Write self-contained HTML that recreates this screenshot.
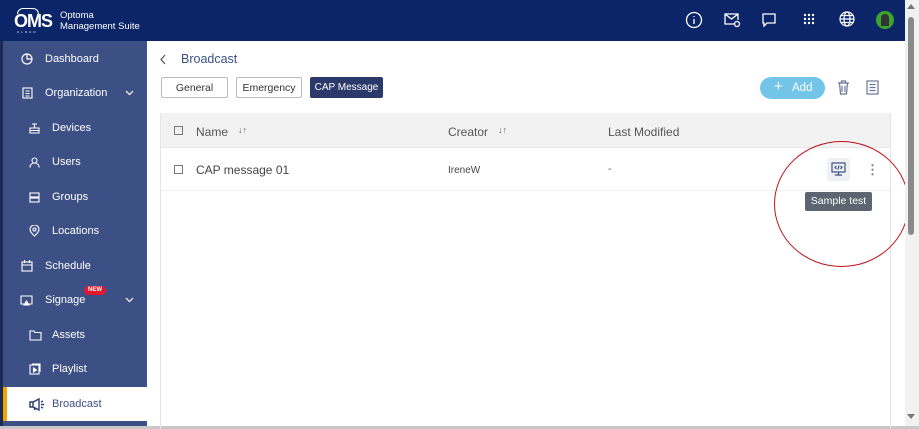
<!DOCTYPE html>
<html><head><meta charset="utf-8"><style>
*{box-sizing:border-box;margin:0;padding:0}
body{width:919px;height:429px;overflow:hidden;background:#fff;font-family:"Liberation Sans",sans-serif;position:relative}
.hdr{position:absolute;left:0;top:0;width:905px;height:41px;background:#0b2568}
.side{position:absolute;left:3px;top:41px;width:144px;height:382px;background:#3d5085;color:#fff;font-size:11px}
.item{position:absolute;left:0;width:144px;height:34px;display:flex;align-items:center}
.item svg{position:absolute}
.item span{position:absolute}
.abs{position:absolute}
.btn{position:absolute;top:77px;height:21px;border:1px solid #bbb;border-radius:2px;font-size:10.5px;color:#333;display:flex;align-items:center;justify-content:center;white-space:nowrap}
.th{font-size:12px;color:#555}
</style></head><body>
<div class="abs" style="left:0;top:0;width:3px;height:429px;background:#1b2a55"></div>
<div class="hdr">
 <div class="abs" style="left:14px;top:11px;color:#fff;font-weight:bold;font-size:18px;letter-spacing:-1px">OMS</div>
 <div class="abs" style="left:17px;top:8px;width:22px;height:6px;border:1px solid #fff;border-bottom:none;border-radius:8px 8px 0 0"></div>
 <div class="abs" style="left:17px;top:30px;color:#fff;font-size:3px;letter-spacing:2px">CLOUD</div>
 <div class="abs" style="left:60px;top:10px;color:#fff;font-size:9.5px;line-height:11px">Optoma<br>Management Suite</div>
 <svg class="abs" style="left:685px;top:11px" width="18" height="18" viewBox="0 0 18 18" fill="none" stroke="#fff" stroke-width="1.3"><circle cx="9" cy="9" r="7.5"/><path d="M9 8v5M9 5v1"/></svg>
 <svg class="abs" style="left:723px;top:12px" width="18" height="16" viewBox="0 0 18 16" fill="none" stroke="#fff" stroke-width="1.3"><path d="M12 12H2V2h13v6M2 2l6.5 5L15 2"/><circle cx="14" cy="12" r="2.5"/></svg>
 <svg class="abs" style="left:762px;top:13px" width="14" height="14" viewBox="0 0 14 14" fill="none" stroke="#fff" stroke-width="1.3"><path d="M1 1h12v9H5l-3 3V10H1z"/></svg>
 <svg class="abs" style="left:803px;top:13px" width="12" height="12" viewBox="0 0 12 12" fill="#fff"><circle cx="2" cy="2" r="1.2"/><circle cx="6" cy="2" r="1.2"/><circle cx="10" cy="2" r="1.2"/><circle cx="2" cy="6" r="1.2"/><circle cx="6" cy="6" r="1.2"/><circle cx="10" cy="6" r="1.2"/><circle cx="2" cy="10" r="1.2"/><circle cx="6" cy="10" r="1.2"/><circle cx="10" cy="10" r="1.2"/></svg>
 <svg class="abs" style="left:839px;top:11px" width="16" height="16" viewBox="0 0 16 16" fill="none" stroke="#fff" stroke-width="1.2"><circle cx="8" cy="8" r="7"/><ellipse cx="8" cy="8" rx="3" ry="7"/><path d="M1 8h14M2 4.5h12M2 11.5h12"/></svg>
 <div class="abs" style="left:876px;top:11px;width:18px;height:18px;border-radius:50%;background:#3aa52d"><div class="abs" style="left:5px;top:3px;width:8px;height:12px;background:#333;border-radius:4px 4px 0 0"></div></div>
</div>
<div class="side">
 <div class="item" style="top:1px"><svg style="left:18px" width="12" height="12" viewBox="0 0 12 12" fill="none" stroke="#fff" stroke-width="1.2"><circle cx="6" cy="6" r="5"/><path d="M6 1v5h5"/></svg><span style="left:42px">Dashboard</span></div>
 <div class="item" style="top:35px"><svg style="left:19px" width="11" height="12" viewBox="0 0 11 12" fill="none" stroke="#fff" stroke-width="1.1"><rect x="1" y="1" width="9" height="10"/><path d="M3.5 4h4M3.5 6.5h4M3.5 9h4"/></svg><span style="left:42px">Organization</span><svg style="left:122px" width="9" height="6" viewBox="0 0 9 6" fill="none" stroke="#fff" stroke-width="1.2"><path d="M1 1l3.5 3.5L8 1"/></svg></div>
 <div class="item" style="top:70px"><svg style="left:26px" width="11" height="11" viewBox="0 0 11 11" fill="none" stroke="#fff" stroke-width="1.1"><path d="M3 1h5M5.5 1v4M1 5h9v5H1zM1 7.5h9"/></svg><span style="left:49px">Devices</span></div>
 <div class="item" style="top:104px"><svg style="left:26px" width="11" height="11" viewBox="0 0 11 11" fill="none" stroke="#fff" stroke-width="1.1"><circle cx="5.5" cy="3.5" r="2.5"/><path d="M1 10.5c0-3 2-4.5 4.5-4.5S10 7.5 10 10.5"/></svg><span style="left:49px">Users</span></div>
 <div class="item" style="top:139px"><svg style="left:26px" width="11" height="11" viewBox="0 0 11 11" fill="none" stroke="#fff" stroke-width="1.1"><rect x="1" y="1" width="9" height="4"/><rect x="1" y="6" width="9" height="4"/></svg><span style="left:49px">Groups</span></div>
 <div class="item" style="top:173px"><svg style="left:26px" width="11" height="12" viewBox="0 0 11 12" fill="none" stroke="#fff" stroke-width="1.1"><path d="M5.5 11S1 7 1 4.5a4.5 4.5 0 019 0C10 7 5.5 11 5.5 11z"/><circle cx="5.5" cy="4.5" r="1.5"/></svg><span style="left:49px">Locations</span></div>
 <div class="item" style="top:208px"><svg style="left:18px" width="12" height="12" viewBox="0 0 12 12" fill="none" stroke="#fff" stroke-width="1.1"><rect x="1" y="2" width="10" height="9"/><path d="M1 5h10M3.5 0v3M8.5 0v3"/></svg><span style="left:42px">Schedule</span></div>
 <div class="item" style="top:242px"><svg style="left:17px" width="13" height="11" viewBox="0 0 13 11" fill="none" stroke="#fff" stroke-width="1.1"><path d="M4 9H1V1h11v8H9"/><path d="M6.5 6L4 10h5z" fill="#fff"/></svg><span style="left:42px">Signage</span><div class="abs" style="left:81px;top:3px;width:22px;height:9px;background:#e0182e;border-radius:5px;font-size:6px;font-weight:bold;text-align:center;line-height:9px">NEW</div><svg style="left:122px" width="9" height="6" viewBox="0 0 9 6" fill="none" stroke="#fff" stroke-width="1.2"><path d="M1 1l3.5 3.5L8 1"/></svg></div>
 <div class="item" style="top:277px"><svg style="left:26px" width="13" height="11" viewBox="0 0 13 11" fill="none" stroke="#fff" stroke-width="1.1"><path d="M1 1h4l1 1.5h6V10H1z"/></svg><span style="left:49px">Assets</span></div>
 <div class="item" style="top:311px"><svg style="left:26px" width="12" height="12" viewBox="0 0 12 12" fill="none" stroke="#fff" stroke-width="1.1"><rect x="1" y="2" width="9" height="9"/><path d="M3 1h8v8"/><path d="M4.5 5v4l3-2z" fill="#fff"/></svg><span style="left:49px">Playlist</span></div>
 <div class="item" style="top:346px;background:#fff;height:34px;color:#3d5085"><div class="abs" style="left:0;top:0;width:4px;height:34px;background:#f0a500"></div><svg style="left:26px" width="16" height="13" viewBox="0 0 16 13" fill="none" stroke="#2b3a70" stroke-width="1.4"><path d="M1 4h3l6-3v11L4 9H1zM4 4v5M5 9l1 3M12 4l2-1M12 6.5h3M12 9l2 1"/></svg><span style="left:49px">Broadcast</span></div>
</div>
<div class="abs" style="left:3px;top:423px;width:144px;height:4px;background:#3d5085"></div>
<div class="abs" style="left:0;top:426px;width:919px;height:3px;background:#c8c8c8"></div>
<svg class="abs" style="left:159px;top:54px" width="8" height="11" viewBox="0 0 8 11" fill="none" stroke="#555" stroke-width="1.2"><path d="M6 1L2 5.5 6 10"/></svg>
<div class="abs" style="left:181px;top:52px;font-size:12.5px;color:#3d5085">Broadcast</div>
<div class="btn" style="left:161px;width:67px">General</div>
<div class="btn" style="left:236px;width:66px">Emergency</div>
<div class="btn" style="left:310px;width:73px;background:#2b3a6b;border-color:#2b3a6b;color:#fff;font-size:10px">CAP Message</div>
<div class="abs" style="left:760px;top:77px;width:65px;height:22px;border-radius:11px;background:#72c4e8;color:#fff;font-size:11.5px;line-height:22px"><span style="position:absolute;left:14px;font-size:15px;top:-1px">+</span><span style="position:absolute;left:32px">Add</span></div>
<svg class="abs" style="left:837px;top:80px" width="13" height="15" viewBox="0 0 13 15" fill="none" stroke="#6a7598" stroke-width="1.2"><path d="M1 3h11M4.5 3V1h4v2M2.5 3l1 11h6l1-11M5 6v6M8 6v6"/></svg>
<svg class="abs" style="left:866px;top:80px" width="13" height="15" viewBox="0 0 13 15" fill="none" stroke="#6a7598" stroke-width="1.2"><rect x="1" y="1" width="11" height="13"/><path d="M3.5 4.5h6M3.5 7.5h6M3.5 10.5h6"/></svg>
<div class="abs" style="left:160px;top:113px;width:731px;height:316px;border-left:1px solid #e5e5e5;border-right:1px solid #e5e5e5"></div>
<div class="abs" style="left:161px;top:113px;width:729px;height:35px;background:#f2f2f2;border-bottom:1px solid #e6e6e6"></div>
<div class="abs" style="left:174px;top:126px;width:9px;height:9px;border:1px solid #777"></div>
<div class="abs th" style="left:196px;top:125px">Name</div>
<div class="abs" style="left:238px;top:125px;font-size:9px;color:#666">↓↑</div>
<div class="abs th" style="left:448px;top:125px">Creator</div>
<div class="abs" style="left:498px;top:125px;font-size:9px;color:#666">↓↑</div>
<div class="abs th" style="left:608px;top:125px">Last Modified</div>
<div class="abs" style="left:161px;top:190px;width:729px;height:1px;background:#eee"></div>
<div class="abs" style="left:174px;top:165px;width:9px;height:9px;border:1px solid #777"></div>
<div class="abs" style="left:196px;top:163px;font-size:12px;color:#444">CAP message 01</div>
<div class="abs" style="left:448px;top:165px;font-size:10px;color:#444">IreneW</div>
<div class="abs" style="left:608px;top:163px;font-size:11px;color:#666">-</div>
<div class="abs" style="left:827px;top:158px;width:23px;height:23px;background:#eef0f3;border-radius:3px"></div>
<svg class="abs" style="left:831px;top:162px" width="15" height="14" viewBox="0 0 15 14" fill="none" stroke="#3d5085" stroke-width="1.2"><rect x="1" y="1" width="13" height="9"/><path d="M4 13h7M7.5 10v3M5.5 4L4 5.5 5.5 7M9.5 4L11 5.5 9.5 7M8 3.5L7 7.5"/></svg>
<div class="abs" style="left:871px;top:163px;width:3px;height:13px;background:radial-gradient(circle,#888 1px,transparent 1.3px) 0 0/3px 4.5px"></div>
<div class="abs" style="left:805px;top:192px;width:67px;height:19px;background:#5b6670;border-radius:2px;color:#fff;font-size:10.5px;line-height:19px;text-align:center">Sample test</div>
<div class="abs" style="left:774px;top:141px;width:135px;height:126px;border:1.5px solid #c0121c;border-radius:50%"></div>
<div class="abs" style="left:905px;top:0;width:14px;height:426px;background:#f1f1f1"></div>
<div class="abs" style="left:908px;top:17px;width:6px;height:218px;background:#8a8a8a;border-radius:3px"></div>
<div class="abs" style="left:907px;top:4px;width:0;height:0;border-left:4px solid transparent;border-right:4px solid transparent;border-bottom:5px solid #777"></div>
<div class="abs" style="left:907px;top:414px;width:0;height:0;border-left:4px solid transparent;border-right:4px solid transparent;border-top:5px solid #777"></div>
</body></html>
